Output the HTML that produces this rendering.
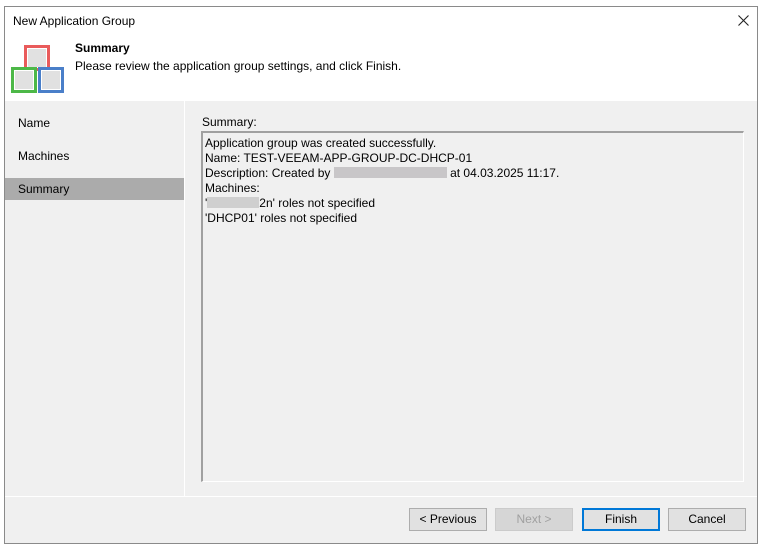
<!DOCTYPE html>
<html><head><meta charset="utf-8"><style>
*{margin:0;padding:0;box-sizing:border-box}
body{width:768px;height:550px;background:#fff;font-family:"Liberation Sans",sans-serif;font-size:12px;color:#000;position:relative;overflow:hidden}
.abs{position:absolute}
.win{left:4px;top:6px;width:754px;height:538px;border:1px solid #8a8a8a;background:#f0f0f0}
.hdr{left:5px;top:7px;width:752px;height:94px;background:#fff}
.sq{position:absolute;width:26px;height:26px;border:3px solid;background:#e1e1e1;box-shadow:inset 0 0 0 1px #fff}
.btn{position:absolute;top:508px;height:23px;width:78px;border:1px solid #adadad;background:#e1e1e1;text-align:center;line-height:21px}
</style></head><body>
<div class="abs win"></div>
<div class="abs hdr"></div>
<div class="abs" style="left:13px;top:14px;">New Application Group</div>
<svg class="abs" style="left:738px;top:15px" width="11" height="11"><path d="M0.5 0.5L10.5 10.5M10.5 0.5L0.5 10.5" stroke="#222" stroke-width="1.1"/></svg>
<div class="sq" style="left:24px;top:45px;border-color:#e95b5b"></div>
<div class="sq" style="left:11px;top:67px;border-color:#4db848"></div>
<div class="sq" style="left:38px;top:67px;border-color:#4a7fc9"></div>
<div class="abs" style="left:75px;top:41px;font-weight:bold;">Summary</div>
<div class="abs" style="left:75px;top:59px;">Please review the application group settings, and click Finish.</div>
<div class="abs" style="left:184px;top:101px;width:1px;height:395px;background:#fff"></div>
<div class="abs" style="left:5px;top:496px;width:752px;height:1px;background:#fff"></div>
<div class="abs" style="left:18px;top:116px;">Name</div>
<div class="abs" style="left:18px;top:149px;">Machines</div>
<div class="abs" style="left:5px;top:178px;width:179px;height:22px;background:#ababab"></div>
<div class="abs" style="left:18px;top:182px;">Summary</div>
<div class="abs" style="left:202px;top:115px;">Summary:</div>
<div class="abs" style="left:201px;top:131px;width:543px;height:351px;border-top:2px solid #a0a0a0;border-left:2px solid #a0a0a0;border-right:1px solid #fff;border-bottom:1px solid #fff;background:#f0f0f0"></div>
<div class="abs" style="left:205px;top:136px;line-height:15px;">
Application group was created successfully.<br>
Name: TEST-VEEAM-APP-GROUP-DC-DHCP-01<br>
Description: Created by <span style="display:inline-block;width:113px;height:11px;background:#c8c6c8;vertical-align:-1px"></span> at 04.03.2025 11:17.<br>
Machines:<br>
'<span style="display:inline-block;width:52px;height:11px;background:#cfcfcf;vertical-align:-1px"></span>2n' roles not specified<br>
'DHCP01' roles not specified</div>
<div class="btn" style="left:409px;">&lt; Previous</div>
<div class="btn" style="left:495px;color:#a0a0a0;border-color:#cbcbcb;background:#d6d6d6">Next &gt;</div>
<div class="btn" style="left:582px;border:2px solid #0078d7;line-height:19px">Finish</div>
<div class="btn" style="left:668px;">Cancel</div>
</body></html>
